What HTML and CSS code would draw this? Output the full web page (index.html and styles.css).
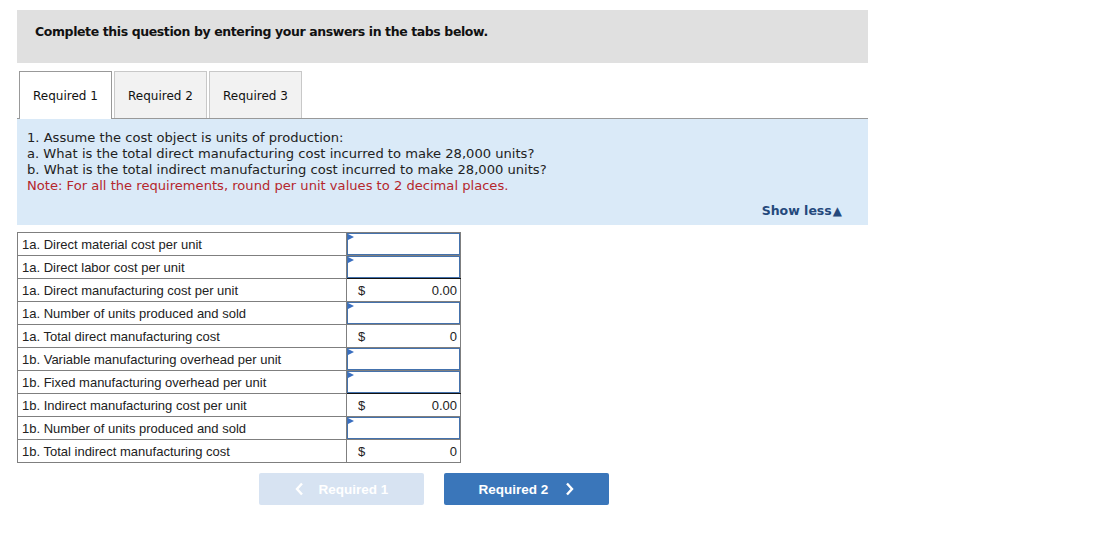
FILE: index.html
```html
<!DOCTYPE html>
<html>
<head>
<meta charset="utf-8">
<link rel="stylesheet" href="styles.css">
</head>
<body>
<div class="page">
  <div class="banner">Complete this question by entering your answers in the tabs below.</div>
  <div class="tabs">
    <div class="tab active">Required 1</div>
    <div class="tab">Required 2</div>
    <div class="tab">Required 3</div>
  </div>
  <div class="panel">
    <div class="q">1. Assume the cost object is units of production:</div>
    <div class="q">a. What is the total direct manufacturing cost incurred to make 28,000 units?</div>
    <div class="q">b. What is the total indirect manufacturing cost incurred to make 28,000 units?</div>
    <div class="q note">Note: For all the requirements, round per unit values to 2 decimal places.</div>
    <div class="showless">Show less<span class="tri">&#9650;</span></div>
  </div>
  <table class="grid">
    <tr><td class="label">1a. Direct material cost per unit</td><td class="val"><div class="inp"></div></td></tr>
    <tr><td class="label">1a. Direct labor cost per unit</td><td class="val db"><div class="inp"></div></td></tr>
    <tr><td class="label">1a. Direct manufacturing cost per unit</td><td class="val"><span class="cur">$</span><span class="num">0.00</span></td></tr>
    <tr><td class="label">1a. Number of units produced and sold</td><td class="val"><div class="inp"></div></td></tr>
    <tr><td class="label">1a. Total direct manufacturing cost</td><td class="val"><span class="cur">$</span><span class="num">0</span></td></tr>
    <tr><td class="label">1b. Variable manufacturing overhead per unit</td><td class="val"><div class="inp"></div></td></tr>
    <tr><td class="label">1b. Fixed manufacturing overhead per unit</td><td class="val db"><div class="inp"></div></td></tr>
    <tr><td class="label">1b. Indirect manufacturing cost per unit</td><td class="val"><span class="cur">$</span><span class="num">0.00</span></td></tr>
    <tr><td class="label">1b. Number of units produced and sold</td><td class="val"><div class="inp"></div></td></tr>
    <tr><td class="label">1b. Total indirect manufacturing cost</td><td class="val"><span class="cur">$</span><span class="num">0</span></td></tr>
  </table>
  <div class="nav">
    <div class="btn disabled">
      <svg class="chev" width="9" height="14" viewBox="0 0 9 14"><path d="M7 1.5 L2 7 L7 12.5" fill="none" stroke="#fff" stroke-width="2.4"/></svg>
      <span>Required 1</span>
    </div>
    <div class="btn primary">
      <span>Required 2</span>
      <svg class="chev" width="9" height="14" viewBox="0 0 9 14"><path d="M2 1.5 L7 7 L2 12.5" fill="none" stroke="#fff" stroke-width="2.4"/></svg>
    </div>
  </div>
</div>
</body>
</html>
```

FILE: styles.css
```css
html, body { margin: 0; padding: 0; background: #fff; }
.page { padding: 10px 0 0 17px; width: 851px; font-family: "DejaVu Sans", Verdana, sans-serif; color: #111; }
.banner { background: #e0e0e0; height: 53px; box-sizing: border-box; padding: 13px 0 0 18px; line-height: 18px; font-weight: bold; font-size: 12.5px; letter-spacing: -0.4px; color: #111; }
.tabs { display: flex; gap: 2px; margin-top: 8px; padding-left: 2px; border-bottom: 1px solid #999; height: 47px; }
.tab { border: 1px solid #c8c8c8; border-bottom: none; background: #f2f2f2; display: flex; align-items: center; justify-content: center; padding-top: 1px; box-sizing: border-box; height: 47px; width: 93px; font-size: 12px; color: #111; }
.active { background: #fff; border-color: #999; height: 48px; position: relative; z-index: 1; }
.panel { background: #daeaf8; height: 106px; padding: 11px 0 0 10px; box-sizing: border-box; position: relative; }
.q { font-size: 13.1px; line-height: 16px; color: #222; }
.note { color: #b5272d; }
.showless { position: absolute; right: 26px; bottom: 7px; font-weight: bold; font-size: 12.5px; color: #25497c; display: flex; align-items: center; }
.tri { font-size: 12px; margin-left: 1px; }
.grid { border-collapse: collapse; margin-top: 7px; font-family: "Liberation Sans", Arial, sans-serif; font-size: 13px; color: #222; }
.grid td { border: 1px solid #7f7f7f; height: 22px; padding: 0; }
.grid td.db { border-bottom-color: #111; }
.label { width: 324px; padding-left: 4px !important; }
.val { width: 113px; }
.inp { height: 20px; border: 1px solid #4472ad; position: relative; }
.inp::before { content: ""; position: absolute; left: 0; top: 0; border-top: 3px solid transparent; border-bottom: 3px solid transparent; border-left: 6px solid #3a6fc0; }
.cur { display: inline-block; margin-left: 11px; }
.num { float: right; margin-right: 3px; }
.nav { display: flex; gap: 20px; margin-top: 10px; padding-left: 242px; }
.btn { width: 165px; height: 32px; border-radius: 2px; display: flex; align-items: center; justify-content: center; gap: 15px; font-family: "Liberation Sans", Arial, sans-serif; font-weight: bold; font-size: 13.5px; color: #fff; }
.disabled { background: #d7e3f2; }
.primary { background: #3a76ba; gap: 17px; }
```
